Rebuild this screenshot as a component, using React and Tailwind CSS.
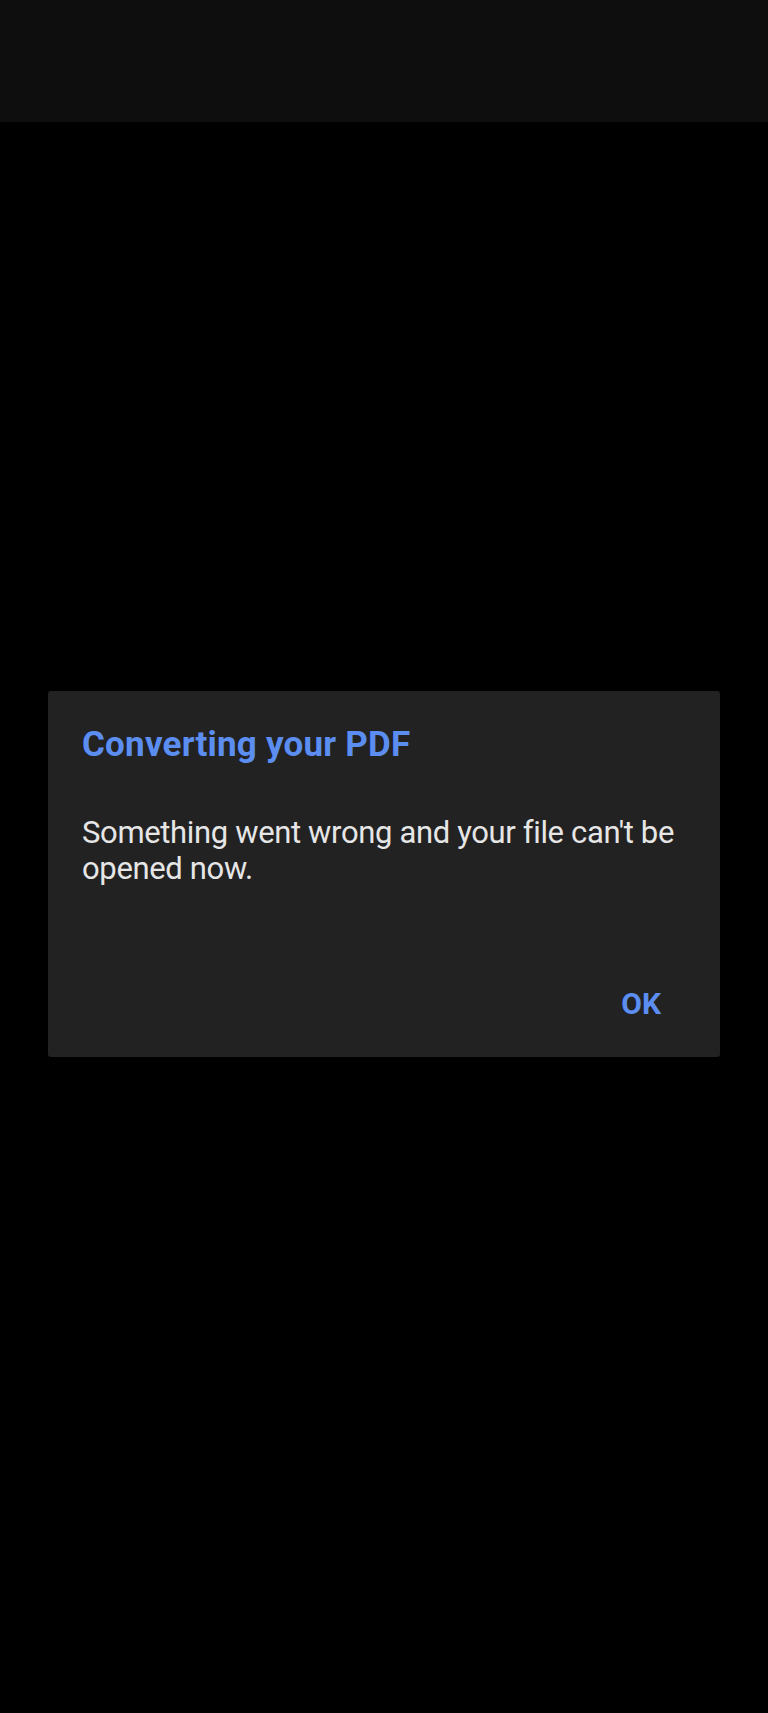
export default function App() {
  return (
    <div className="w-[768px] h-[1713px] bg-black flex flex-col" style={{ fontFamily: 'Roboto, "Noto Sans", sans-serif' }}>
      <div className="h-[122px] bg-[#0e0e0e] shrink-0" />
      <div className="pt-[569px] px-[48px]">
        <div className="bg-[#222222] rounded-[3px] h-[366px] pl-[34px] pr-[40px] pt-[33px] flex flex-col">
          <div className="text-[35px] leading-[41px] font-bold text-[#5b8ef0] tracking-[0.2px]">Converting your PDF</div>
          <div className="mt-[50px] text-[31px] leading-[36px] text-[#e6e6e6] tracking-[-0.35px]">Something went wrong and your file can't be opened now.</div>
          <div className="mt-[99px] flex justify-end pr-[19px]">
            <div className="text-[30px] leading-[36px] font-bold text-[#5b8ef0]">OK</div>
          </div>
        </div>
      </div>
    </div>
  );
}
